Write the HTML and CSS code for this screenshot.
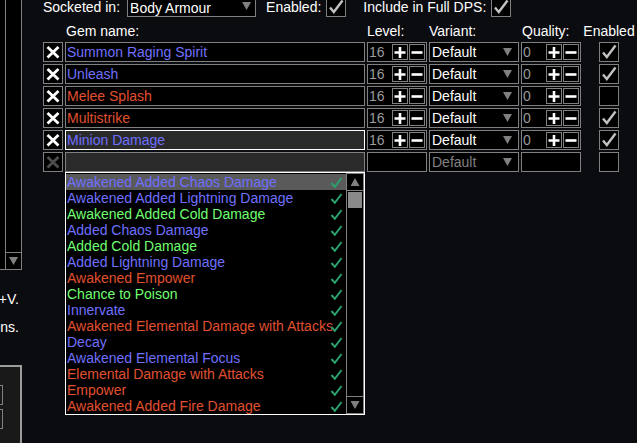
FILE: index.html
```html
<!DOCTYPE html>
<html lang="en">
<head>
    <meta charset="UTF-8">
    <meta name="viewport" content="width=device-width, initial-scale=1.0">
    <title>Gem Sockets</title>
    <link rel="stylesheet" href="styles.css">
</head>
<body>
    <div class="app">
        <aside class="side">
            <div class="side-list">
                <div class="side-scroll">
                    <div class="scroll-btn bottom"><span class="tri"></span></div>
                </div>
            </div>
            <p class="side-note"><span>Paste with Ctrl+V.</span></p>
            <p class="side-note second"><span>for more options.</span></p>
            <div class="side-box">
                <div class="side-field"></div>
                <div class="side-field"></div>
            </div>
        </aside>

        <main class="socket">
            <div class="socket-bar">
                <span>Socketed in:</span>
                <div class="field select slot"><span>Body Armour</span><span class="tri"></span></div>
                <span class="bar-label">Enabled:</span>
                <div class="check bar-check"><svg width="18" height="18" viewBox="0 0 18 18"><path d="M3 9.5L6.8 14L15.5 2.5" /></svg></div>
                <span class="bar-label wide">Include in Full DPS:</span>
                <div class="check bar-check"><svg width="18" height="18" viewBox="0 0 18 18"><path d="M3 9.5L6.8 14L15.5 2.5" /></svg></div>
            </div>

            <div class="gem-grid">
                <div></div>
                <div class="head pad">Gem name:</div>
                <div class="head">Level:</div>
                <div class="head">Variant:</div>
                <div class="head pad">Quality:</div>
                <div class="head center">Enabled</div>

                <!-- row 1 -->
                <div class="remove"><svg width="18" height="18" viewBox="0 0 18 18"><path d="M3.5 4L14.5 14.5M14.5 4L3.5 14.5" /></svg></div>
                <div class="field gem-name int">Summon Raging Spirit</div>
                <div class="field spin"><span class="spin-value">16</span><span class="spin-btn"><svg width="14" height="14" viewBox="0 0 14 14"><path d="M1.5 7.5H12.5M7 2V13" /></svg></span><span class="spin-btn"><svg width="14" height="14" viewBox="0 0 14 14"><path d="M1.5 7.5H12.5" /></svg></span></div>
                <div class="field select"><span>Default</span><span class="tri"></span></div>
                <div class="field spin"><span class="spin-value">0</span><span class="spin-btn"><svg width="14" height="14" viewBox="0 0 14 14"><path d="M1.5 7.5H12.5M7 2V13" /></svg></span><span class="spin-btn"><svg width="14" height="14" viewBox="0 0 14 14"><path d="M1.5 7.5H12.5" /></svg></span></div>
                <div class="check-cell"><div class="check"><svg width="18" height="18" viewBox="0 0 18 18"><path d="M3 9.5L6.8 14L15.5 2.5" /></svg></div></div>

                <!-- row 2 -->
                <div class="remove"><svg width="18" height="18" viewBox="0 0 18 18"><path d="M3.5 4L14.5 14.5M14.5 4L3.5 14.5" /></svg></div>
                <div class="field gem-name int">Unleash</div>
                <div class="field spin"><span class="spin-value">16</span><span class="spin-btn"><svg width="14" height="14" viewBox="0 0 14 14"><path d="M1.5 7.5H12.5M7 2V13" /></svg></span><span class="spin-btn"><svg width="14" height="14" viewBox="0 0 14 14"><path d="M1.5 7.5H12.5" /></svg></span></div>
                <div class="field select"><span>Default</span><span class="tri"></span></div>
                <div class="field spin"><span class="spin-value">0</span><span class="spin-btn"><svg width="14" height="14" viewBox="0 0 14 14"><path d="M1.5 7.5H12.5M7 2V13" /></svg></span><span class="spin-btn"><svg width="14" height="14" viewBox="0 0 14 14"><path d="M1.5 7.5H12.5" /></svg></span></div>
                <div class="check-cell"><div class="check"><svg width="18" height="18" viewBox="0 0 18 18"><path d="M3 9.5L6.8 14L15.5 2.5" /></svg></div></div>

                <!-- row 3 -->
                <div class="remove"><svg width="18" height="18" viewBox="0 0 18 18"><path d="M3.5 4L14.5 14.5M14.5 4L3.5 14.5" /></svg></div>
                <div class="field gem-name str">Melee Splash</div>
                <div class="field spin"><span class="spin-value">16</span><span class="spin-btn"><svg width="14" height="14" viewBox="0 0 14 14"><path d="M1.5 7.5H12.5M7 2V13" /></svg></span><span class="spin-btn"><svg width="14" height="14" viewBox="0 0 14 14"><path d="M1.5 7.5H12.5" /></svg></span></div>
                <div class="field select"><span>Default</span><span class="tri"></span></div>
                <div class="field spin"><span class="spin-value">0</span><span class="spin-btn"><svg width="14" height="14" viewBox="0 0 14 14"><path d="M1.5 7.5H12.5M7 2V13" /></svg></span><span class="spin-btn"><svg width="14" height="14" viewBox="0 0 14 14"><path d="M1.5 7.5H12.5" /></svg></span></div>
                <div class="check-cell"><div class="check"></div></div>

                <!-- row 4 -->
                <div class="remove"><svg width="18" height="18" viewBox="0 0 18 18"><path d="M3.5 4L14.5 14.5M14.5 4L3.5 14.5" /></svg></div>
                <div class="field gem-name str">Multistrike</div>
                <div class="field spin"><span class="spin-value">16</span><span class="spin-btn"><svg width="14" height="14" viewBox="0 0 14 14"><path d="M1.5 7.5H12.5M7 2V13" /></svg></span><span class="spin-btn"><svg width="14" height="14" viewBox="0 0 14 14"><path d="M1.5 7.5H12.5" /></svg></span></div>
                <div class="field select"><span>Default</span><span class="tri"></span></div>
                <div class="field spin"><span class="spin-value">0</span><span class="spin-btn"><svg width="14" height="14" viewBox="0 0 14 14"><path d="M1.5 7.5H12.5M7 2V13" /></svg></span><span class="spin-btn"><svg width="14" height="14" viewBox="0 0 14 14"><path d="M1.5 7.5H12.5" /></svg></span></div>
                <div class="check-cell"><div class="check"><svg width="18" height="18" viewBox="0 0 18 18"><path d="M3 9.5L6.8 14L15.5 2.5" /></svg></div></div>

                <!-- row 5 -->
                <div class="remove"><svg width="18" height="18" viewBox="0 0 18 18"><path d="M3.5 4L14.5 14.5M14.5 4L3.5 14.5" /></svg></div>
                <div class="field gem-name int focus">Minion Damage</div>
                <div class="field spin"><span class="spin-value">16</span><span class="spin-btn"><svg width="14" height="14" viewBox="0 0 14 14"><path d="M1.5 7.5H12.5M7 2V13" /></svg></span><span class="spin-btn"><svg width="14" height="14" viewBox="0 0 14 14"><path d="M1.5 7.5H12.5" /></svg></span></div>
                <div class="field select"><span>Default</span><span class="tri"></span></div>
                <div class="field spin"><span class="spin-value">0</span><span class="spin-btn"><svg width="14" height="14" viewBox="0 0 14 14"><path d="M1.5 7.5H12.5M7 2V13" /></svg></span><span class="spin-btn"><svg width="14" height="14" viewBox="0 0 14 14"><path d="M1.5 7.5H12.5" /></svg></span></div>
                <div class="check-cell"><div class="check"><svg width="18" height="18" viewBox="0 0 18 18"><path d="M3 9.5L6.8 14L15.5 2.5" /></svg></div></div>

                <!-- row 6: new gem slot with the open gem list -->
                <div class="remove disabled"><svg width="18" height="18" viewBox="0 0 18 18"><path d="M3.5 4L14.5 14.5M14.5 4L3.5 14.5" /></svg></div>
                <div class="field gem-name blank">
                    <div class="gem-dropdown">
                        <div class="gem-options">
                            <div class="gem-option int hover">Awakened Added Chaos Damage<svg class="ok" width="13" height="11" viewBox="0 0 13 11"><path d="M1.5 6L4.8 9.8L11.5 1" /></svg></div>
                            <div class="gem-option int">Awakened Added Lightning Damage<svg class="ok" width="13" height="11" viewBox="0 0 13 11"><path d="M1.5 6L4.8 9.8L11.5 1" /></svg></div>
                            <div class="gem-option dex">Awakened Added Cold Damage<svg class="ok" width="13" height="11" viewBox="0 0 13 11"><path d="M1.5 6L4.8 9.8L11.5 1" /></svg></div>
                            <div class="gem-option int">Added Chaos Damage<svg class="ok" width="13" height="11" viewBox="0 0 13 11"><path d="M1.5 6L4.8 9.8L11.5 1" /></svg></div>
                            <div class="gem-option dex">Added Cold Damage<svg class="ok" width="13" height="11" viewBox="0 0 13 11"><path d="M1.5 6L4.8 9.8L11.5 1" /></svg></div>
                            <div class="gem-option int">Added Lightning Damage<svg class="ok" width="13" height="11" viewBox="0 0 13 11"><path d="M1.5 6L4.8 9.8L11.5 1" /></svg></div>
                            <div class="gem-option str">Awakened Empower<svg class="ok" width="13" height="11" viewBox="0 0 13 11"><path d="M1.5 6L4.8 9.8L11.5 1" /></svg></div>
                            <div class="gem-option dex">Chance to Poison<svg class="ok" width="13" height="11" viewBox="0 0 13 11"><path d="M1.5 6L4.8 9.8L11.5 1" /></svg></div>
                            <div class="gem-option int">Innervate<svg class="ok" width="13" height="11" viewBox="0 0 13 11"><path d="M1.5 6L4.8 9.8L11.5 1" /></svg></div>
                            <div class="gem-option str">Awakened Elemental Damage with Attacks<svg class="ok" width="13" height="11" viewBox="0 0 13 11"><path d="M1.5 6L4.8 9.8L11.5 1" /></svg></div>
                            <div class="gem-option int">Decay<svg class="ok" width="13" height="11" viewBox="0 0 13 11"><path d="M1.5 6L4.8 9.8L11.5 1" /></svg></div>
                            <div class="gem-option int">Awakened Elemental Focus<svg class="ok" width="13" height="11" viewBox="0 0 13 11"><path d="M1.5 6L4.8 9.8L11.5 1" /></svg></div>
                            <div class="gem-option str">Elemental Damage with Attacks<svg class="ok" width="13" height="11" viewBox="0 0 13 11"><path d="M1.5 6L4.8 9.8L11.5 1" /></svg></div>
                            <div class="gem-option str">Empower<svg class="ok" width="13" height="11" viewBox="0 0 13 11"><path d="M1.5 6L4.8 9.8L11.5 1" /></svg></div>
                            <div class="gem-option str">Awakened Added Fire Damage<svg class="ok" width="13" height="11" viewBox="0 0 13 11"><path d="M1.5 6L4.8 9.8L11.5 1" /></svg></div>
                        </div>
                        <div class="list-scroll">
                            <div class="scroll-btn top"><span class="tri up"></span></div>
                            <div class="scroll-thumb"></div>
                            <div class="scroll-btn bottom"><span class="tri"></span></div>
                        </div>
                    </div>
                </div>
                <div class="field"></div>
                <div class="field select dim"><span>Default</span><span class="tri"></span></div>
                <div class="field"></div>
                <div class="check-cell"><div class="check"></div></div>
            </div>
        </main>
    </div>
</body>
</html>
```

FILE: styles.css
```css
:root {
    --border: #808080;
    --str: #e05030;
    --dex: #70ff70;
    --int: #7070ff;
}

body {
    margin: 0;
    width: 637px;
    height: 443px;
    overflow: hidden;
    background-color: #0b0c10;
    color: #fff;
    font-family: "Liberation Sans", Arial, sans-serif;
    font-size: 14px;
    line-height: 18px;
}

.app {
    display: flex;
    align-items: flex-start;
}

/* left column, mostly cut off by the window edge */
.side {
    width: 22px;
    flex-shrink: 0;
}

.side-list {
    box-sizing: border-box;
    height: 270px;
    display: flex;
    justify-content: flex-end;
    background-color: #000;
    border-right: 1px solid var(--border);
    border-bottom: 1px solid var(--border);
}

.side-scroll {
    width: 15px;
    display: flex;
    flex-direction: column;
    justify-content: flex-end;
    border-left: 1px solid var(--border);
}

.side-note {
    margin: 20px 0 0;
    display: flex;
    justify-content: flex-end;
    padding-right: 3px;
    white-space: nowrap;
    height: 18px;
}

.side-note.second {
    margin-top: 10px;
}

.side-box {
    margin-top: 29px;
    height: 80px;
    box-sizing: border-box;
    background-color: #191919;
    border-top: 2px solid #9c9c9c;
    border-right: 2px solid #9c9c9c;
    padding-top: 18px;
}

.side-field {
    box-sizing: border-box;
    width: 23px;
    height: 20px;
    margin-left: -20px;
    margin-bottom: 4px;
    border: 1px solid var(--border);
}

/* main socket group editor */
.socket {
    margin-left: 21px;
}

.socket-bar {
    display: flex;
    align-items: center;
    height: 20px;
    margin-top: -3px;
    white-space: nowrap;
}

.slot {
    width: 129px;
    height: 18px !important;
    margin-left: 7px;
    align-self: flex-end;
}

.bar-label {
    margin-left: 10px;
}

.bar-label.wide {
    margin-left: 17px;
}

.bar-check {
    margin-left: 5px;
}

.gem-grid {
    display: grid;
    grid-template-columns: 20px 300px 60px 90px 60px 52px;
    grid-auto-rows: 20px;
    grid-template-rows: 17px;
    column-gap: 2px;
    row-gap: 2px;
    margin-top: 6px;
}

.head {
    line-height: 17px;
    white-space: nowrap;
}

.head.pad {
    padding-left: 1px;
}

.head.center {
    text-align: center;
}

.field {
    box-sizing: border-box;
    height: 20px;
    border: 1px solid var(--border);
    background-color: #000;
    display: flex;
    align-items: center;
    white-space: nowrap;
}

.gem-name {
    padding-left: 1px;
    position: relative;
}

.gem-name.focus {
    border-color: #fff;
    background-color: #2a2a2a;
}

.gem-name.blank {
    background-color: #2a2a2a;
}

.int { color: var(--int); }
.str { color: var(--str); }
.dex { color: var(--dex); }

.remove {
    box-sizing: border-box;
    width: 20px;
    height: 20px;
    border: 1px solid var(--border);
    background-color: #000;
}

.remove svg {
    display: block;
    fill: none;
    stroke: #fff;
    stroke-width: 2.8;
}

.remove.disabled svg {
    stroke: #4e4e4e;
}

.spin {
    padding-left: 1px;
}

.spin-value {
    flex: 1;
    color: #9a9a9a;
}

.spin-btn {
    box-sizing: border-box;
    width: 16px;
    height: 16px;
    margin-left: 1px;
    border: 1px solid var(--border);
}

.spin-btn:last-child {
    margin-right: 1px;
}

.spin-btn svg {
    display: block;
    fill: none;
    stroke: #fff;
    stroke-width: 2.6;
}

.select {
    padding-left: 2px;
}

.select.dim {
    color: #808080;
}

.tri {
    width: 9px;
    height: 8px;
    background-color: var(--border);
    clip-path: polygon(0 0, 100% 0, 50% 100%);
}

.tri.up {
    clip-path: polygon(50% 0, 100% 100%, 0 100%);
}

.select .tri {
    margin-left: auto;
    margin-right: 6px;
}

.slot .tri {
    margin-right: 4px;
    margin-top: -4px;
}

.check-cell {
    display: flex;
    justify-content: center;
}

.check {
    box-sizing: border-box;
    width: 20px;
    height: 20px;
    flex-shrink: 0;
    border: 1px solid var(--border);
    background-color: #000;
}

.check svg {
    display: block;
    fill: none;
    stroke: #c2c2c2;
    stroke-width: 2.4;
}

/* gem list popup under the empty slot */
.gem-dropdown {
    position: absolute;
    left: -1px;
    top: 19px;
    z-index: 2;
    box-sizing: border-box;
    width: 300px;
    height: 243px;
    display: flex;
    background-color: #000;
    border: 1px solid #fff;
}

.gem-options {
    flex: 1;
    padding-top: 1px;
}

.gem-option {
    position: relative;
    height: 16px;
    line-height: 16px;
    padding-left: 1px;
    white-space: nowrap;
}

.gem-option.hover {
    background-color: #5a5a5a;
}

.gem-option .ok {
    position: absolute;
    right: 3px;
    top: 3px;
    fill: none;
    stroke: #2c9f6c;
    stroke-width: 2;
}

.list-scroll {
    box-sizing: border-box;
    width: 18px;
    display: flex;
    flex-direction: column;
    border: 1px solid var(--border);
}

.scroll-btn {
    box-sizing: border-box;
    height: 17px;
    display: flex;
    align-items: center;
    justify-content: center;
}

.scroll-btn.top {
    border-bottom: 1px solid var(--border);
}

.scroll-btn.bottom {
    border-top: 1px solid var(--border);
    margin-top: auto;
}

.scroll-thumb {
    height: 16px;
    margin: 1px;
    background-color: #8a8a8a;
}
```
